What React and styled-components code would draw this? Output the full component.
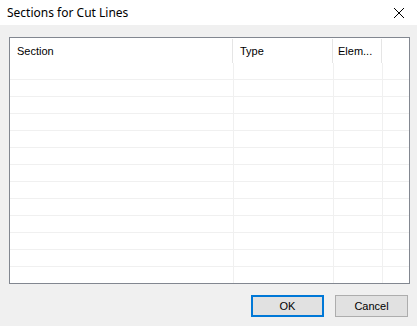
import styled, { createGlobalStyle } from 'styled-components'

const GlobalStyle = createGlobalStyle`
html, body {
  margin: 0;
  padding: 0;
  background: #f0f0f0;
}
`

const Window = styled.div`
width: 417px;
height: 326px;
background: #f0f0f0;
display: flex;
flex-direction: column;
overflow: hidden;
`

const TitleBar = styled.div`
height: 25px;
background: #ffffff;
display: flex;
align-items: center;
justify-content: space-between;
padding: 0 7px 0 7px;
font-family: "Segoe UI", "Noto Sans", "Open Sans", sans-serif;
font-size: 12px;
color: #000;
`

const CloseBtn = styled.div`
width: 12px;
height: 12px;
display: flex;
margin-right: 5px;
margin-top: 1px;
`

const Body = styled.div`
flex: 1;
display: flex;
flex-direction: column;
padding: 12px 7px 0 9px;
`

const ListBox = styled.div`
height: 245px;
border: 1px solid #828790;
background: #ffffff;
overflow: hidden;
display: flex;
flex-direction: column;
font-family: "Liberation Sans", Arial, sans-serif;
font-size: 11px;
color: #000;
`

const HeaderRow = styled.div`
display: flex;
height: 25px;
flex-shrink: 0;
`

const HeaderCell = styled.div`
width: ${p => p.w}px;
position: relative;
padding-left: ${p => p.pad}px;
box-sizing: border-box;
display: flex;
align-items: center;
padding-top: 1px;
&::after {
  content: '';
  display: ${p => (p.last ? 'none' : 'block')};
  position: absolute;
  right: 0;
  top: 1px;
  bottom: 0;
  width: 1px;
  background: #e5e5e5;
}
`

const Row = styled.div`
display: flex;
height: 17px;
flex-shrink: 0;
box-sizing: border-box;
border-bottom: 1px solid #f0f0f0;
`

const Cell = styled.div`
width: ${p => p.w}px;
box-sizing: border-box;
border-right: ${p => (p.last ? 'none' : '1px solid #f0f0f0')};
`

const Footer = styled.div`
display: flex;
justify-content: flex-end;
gap: 11px;
padding-top: 11px;
padding-right: 2px;
`

const Button = styled.button`
width: 73px;
height: 22px;
box-sizing: border-box;
background: #e1e1e1;
border: ${p => (p.primary ? '2px solid #0078d7' : '1px solid #adadad')};
font-family: "Liberation Sans", Arial, sans-serif;
font-size: 11px;
color: #000;
padding: 0;
margin: 0;
`

const headCols = [
  { label: 'Section', w: 223, pad: 7 },
  { label: 'Type', w: 100, pad: 7 },
  { label: 'Elem...', w: 49, pad: 5 },
  { label: '', w: 27, pad: 0, last: true },
]

const bodyCols = [224, 100, 49, 26]

export default function App() {
  const rows = Array.from({ length: 13 })
  return (
    <>
      <GlobalStyle />
      <Window>
        <TitleBar>
          <span>Sections for Cut Lines</span>
          <CloseBtn>
            <svg width="12" height="12" viewBox="0 0 12 12">
              <path d="M1 1 L11 11 M11 1 L1 11" stroke="#000" strokeWidth="1" fill="none" />
            </svg>
          </CloseBtn>
        </TitleBar>
        <Body>
          <ListBox>
            <HeaderRow>
              {headCols.map((c, i) => (
                <HeaderCell key={i} w={c.w} pad={c.pad} last={c.last}>
                  {c.label}
                </HeaderCell>
              ))}
            </HeaderRow>
            {rows.map((_, r) => (
              <Row key={r}>
                {bodyCols.map((w, i) => (
                  <Cell key={i} w={w} last={i === bodyCols.length - 1} />
                ))}
              </Row>
            ))}
          </ListBox>
          <Footer>
            <Button primary>OK</Button>
            <Button>Cancel</Button>
          </Footer>
        </Body>
      </Window>
    </>
  )
}
